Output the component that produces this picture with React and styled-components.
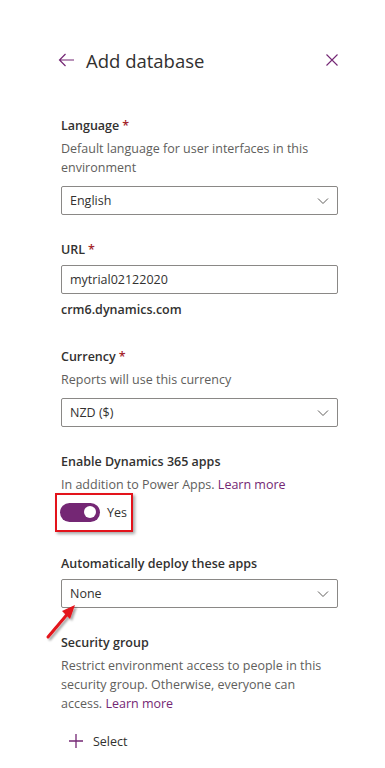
import React from "react";
import styled, { createGlobalStyle } from "styled-components";

const GlobalStyle = createGlobalStyle`
  * { box-sizing: border-box; }
  body {
    margin: 0;
    background: #fff;
    font-family: "Open Sans", "Noto Sans", Arial, sans-serif;
    color: #323130;
  }
`;

const Panel = styled.div`
  width: 385px;
  height: 768px;
  padding: 40px 47px 0 61px;
  overflow: hidden;
  position: relative;
`;

const Header = styled.div`
  display: flex;
  align-items: center;
  height: 40px;
  margin-left: -3px;
  margin-bottom: 36px;
`;

const IconButton = styled.span`
  display: flex;
  align-items: center;
  justify-content: center;
  color: #742774;
`;

const Title = styled.h1`
  flex: 1;
  margin: 0 0 0 11px;
  font-size: 18.5px;
  font-weight: 400;
  color: #323130;
`;

const Section = styled.div`
  margin-bottom: ${(p) => p.$gap || 24}px;
`;

const Label = styled.div`
  font-size: 12.5px;
  font-weight: 600;
  line-height: 20px;
  margin-bottom: ${(p) => p.$gap || 0}px;
`;

const Required = styled.span`
  color: #a4262c;
  margin-left: 3px;
`;

const Desc = styled.div`
  font-size: 12.5px;
  line-height: 19px;
  color: #605e5c;
  margin-top: 3px;
  margin-bottom: 9px;
`;

const Link = styled.a`
  color: #742774;
  text-decoration: none;
`;

const Box = styled.div`
  display: flex;
  align-items: center;
  justify-content: space-between;
  height: 29px;
  padding: 0 8px 0 8px;
  border: 1px solid #8a8886;
  border-radius: 2px;
  font-size: 12.5px;
  color: #323130;
`;

const Hint = styled.div`
  margin-top: 6px;
  font-size: 12.5px;
  font-weight: 600;
  line-height: 20px;
`;

const ToggleRow = styled.div`
  position: relative;
  display: flex;
  align-items: center;
  gap: 7px;
  height: 28px;
  margin-top: -5px;
  margin-left: -1px;
  font-size: 12.5px;
`;

const Track = styled.span`
  position: relative;
  width: 40px;
  height: 19px;
  border-radius: 10px;
  background: #742774;
`;

const Knob = styled.span`
  position: absolute;
  right: 4px;
  top: 3.5px;
  width: 12px;
  height: 12px;
  border-radius: 50%;
  background: #fff;
`;

const Highlight = styled.span`
  position: absolute;
  left: -5px;
  top: -5px;
  width: 78px;
  height: 39px;
  border: 2.5px solid #e3131b;
  box-shadow: 2px 2px 3px rgba(0, 0, 0, 0.35);
  pointer-events: none;
`;

const Annotation = styled.svg`
  position: absolute;
  left: 40px;
  top: 600px;
  overflow: visible;
`;

const AddButton = styled.div`
  display: flex;
  align-items: center;
  gap: 10px;
  height: 32px;
  margin-left: 8px;
  font-size: 12.5px;
  color: #323130;
`;

const Chevron = () => (
  <svg width="12" height="8" viewBox="0 0 12 8">
    <path d="M1 1.5 L6 6.5 L11 1.5" fill="none" stroke="#605e5c" strokeWidth="1" />
  </svg>
);

const Dropdown = ({ value }) => (
  <Box>
    <span>{value}</span>
    <Chevron />
  </Box>
);

export default function App() {
  return (
    <>
      <GlobalStyle />
      <Panel>
        <Header>
          <IconButton>
            <svg width="17" height="14" viewBox="0 0 17 14">
              <path d="M16 7 H1.5 M7.5 1 L1.5 7 L7.5 13" fill="none" stroke="#742774" strokeWidth="1.2" />
            </svg>
          </IconButton>
          <Title>Add database</Title>
          <IconButton>
            <svg width="12" height="12" viewBox="0 0 12 12">
              <path d="M0.5 0.5 L11.5 11.5 M11.5 0.5 L0.5 11.5" fill="none" stroke="#742774" strokeWidth="1.1" />
            </svg>
          </IconButton>
        </Header>

        <Section $gap={25}>
          <Label>
            Language<Required>*</Required>
          </Label>
          <Desc>Default language for user interfaces in this environment</Desc>
          <Dropdown value="English" />
        </Section>

        <Section $gap={27}>
          <Label $gap={5}>
            URL<Required>*</Required>
          </Label>
          <Box>mytrial02122020</Box>
          <Hint>crm6.dynamics.com</Hint>
        </Section>

        <Section $gap={25}>
          <Label>
            Currency<Required>*</Required>
          </Label>
          <Desc>Reports will use this currency</Desc>
          <Dropdown value="NZD ($)" />
        </Section>

        <Section $gap={28}>
          <Label>Enable Dynamics 365 apps</Label>
          <Desc>
            In addition to Power Apps. <Link href="#">Learn more</Link>
          </Desc>
          <ToggleRow>
            <Track>
              <Knob />
            </Track>
            <span>Yes</span>
            <Highlight />
          </ToggleRow>
        </Section>

        <Section $gap={25}>
          <Label $gap={5}>Automatically deploy these apps</Label>
          <Dropdown value="None" />
        </Section>

        <Section $gap={12}>
          <Label>Security group</Label>
          <Desc>
            Restrict environment access to people in this security group. Otherwise, everyone can
            access. <Link href="#">Learn more</Link>
          </Desc>
        </Section>

        <AddButton>
          <svg width="14" height="14" viewBox="0 0 14 14">
            <path d="M7 0 V14 M0 7 H14" fill="none" stroke="#742774" strokeWidth="1.3" />
          </svg>
          <span>Select</span>
        </AddButton>

        <Annotation width="40" height="40" viewBox="0 0 40 40">
          <defs>
            <filter id="sh" x="-50%" y="-50%" width="200%" height="200%">
              <feDropShadow dx="2" dy="2" stdDeviation="1.2" floodColor="#000" floodOpacity="0.35" />
            </filter>
          </defs>
          <g filter="url(#sh)">
            <path d="M8 37 L30 11" stroke="#e3131b" strokeWidth="3" strokeLinecap="round" />
            <path d="M35 5 L22 11 L30 19 Z" fill="#e3131b" />
          </g>
        </Annotation>
      </Panel>
    </>
  );
}
